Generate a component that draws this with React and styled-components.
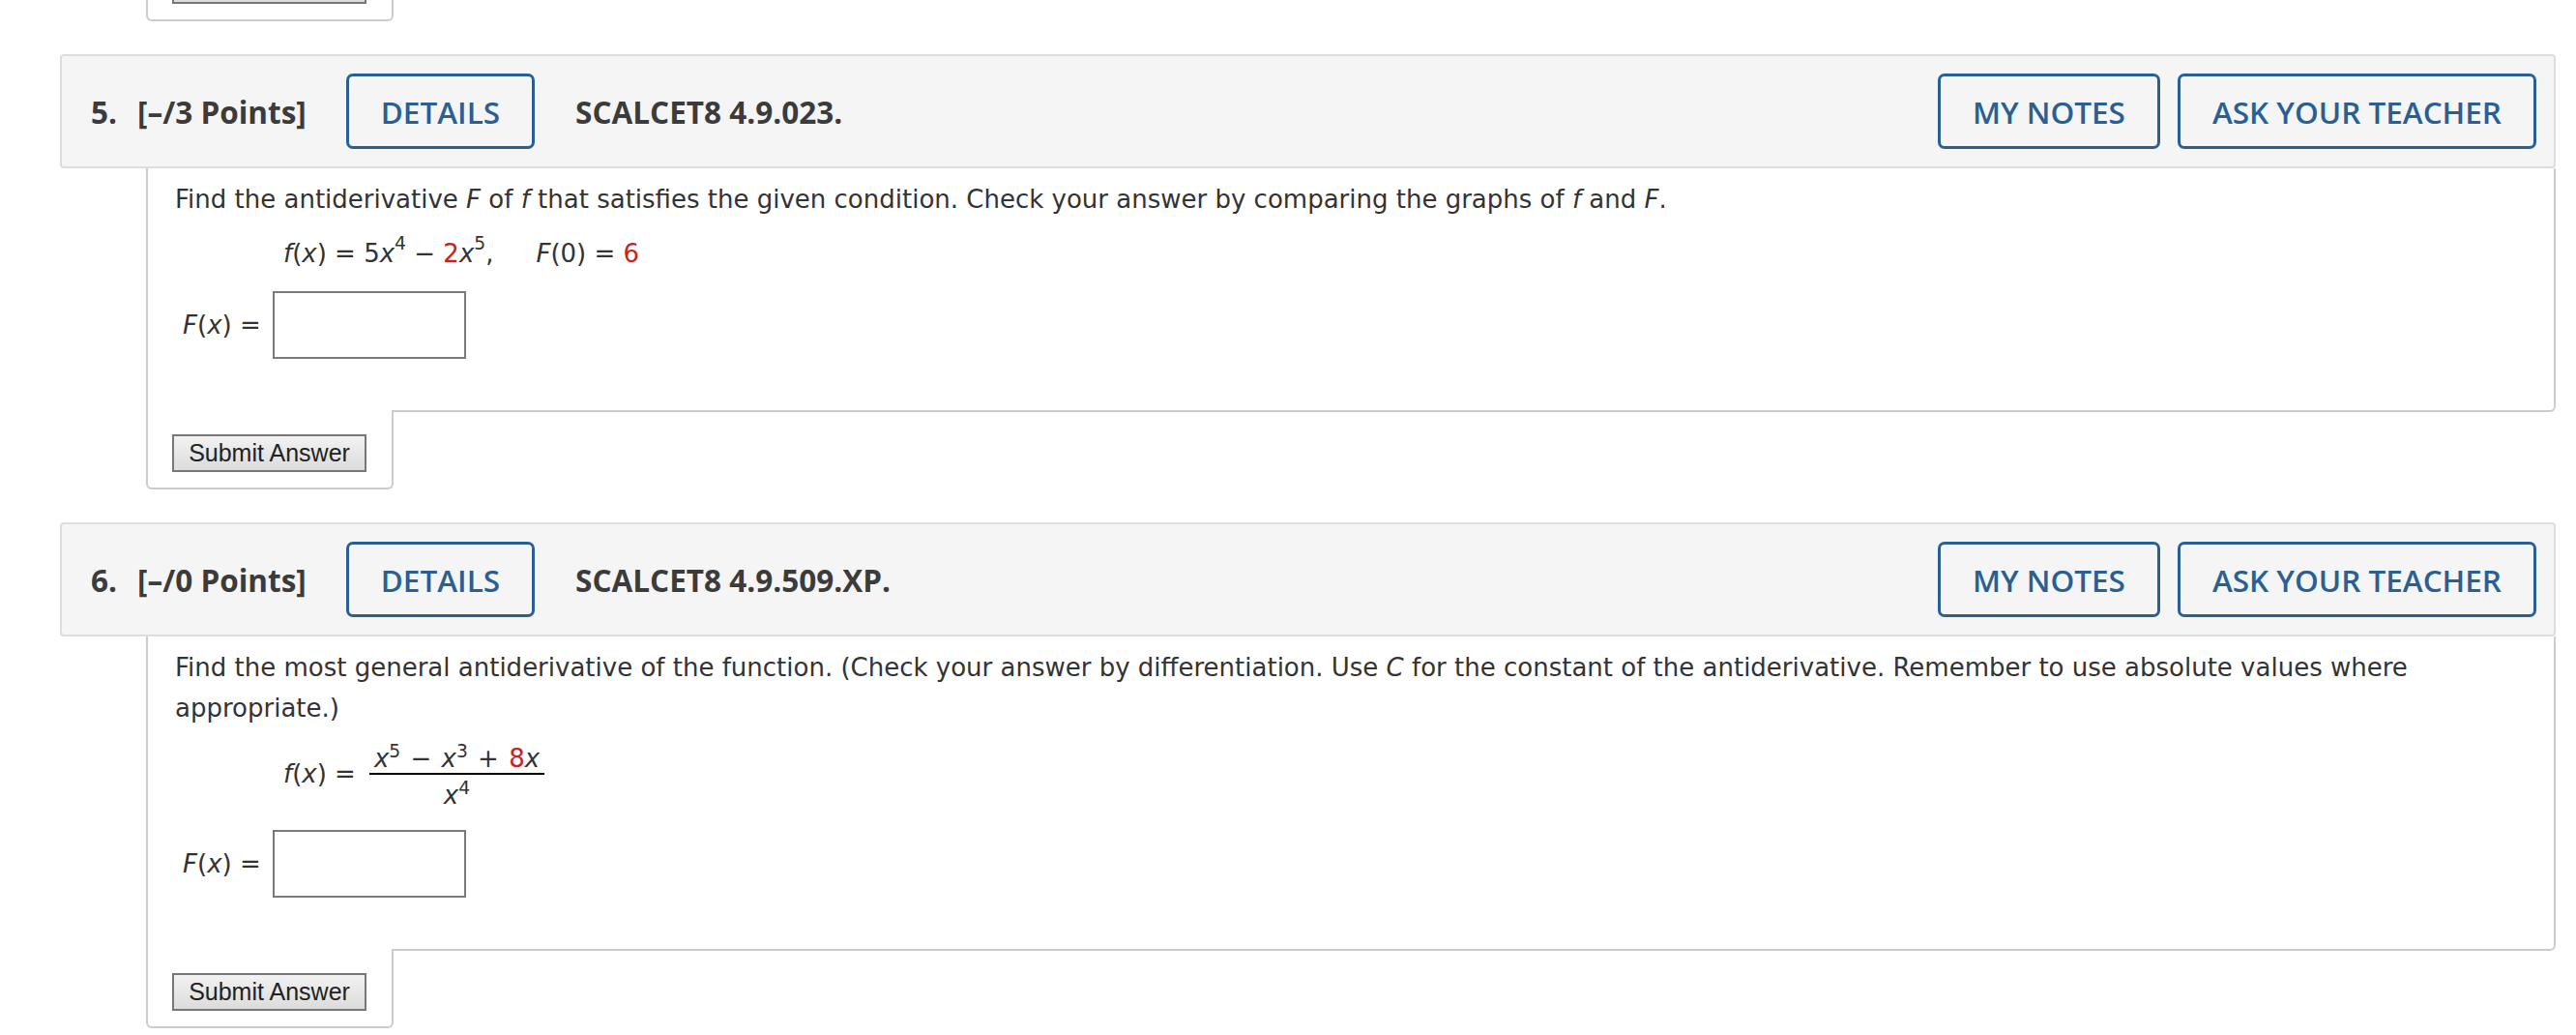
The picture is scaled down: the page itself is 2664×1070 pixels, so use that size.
import React from "react";
import styled, { createGlobalStyle } from "styled-components";

const GlobalStyle = createGlobalStyle`
  html, body {
    margin: 0;
    padding: 0;
    background: #ffffff;
  }
  body {
    font-family: "DejaVu Sans", Verdana, sans-serif;
    color: #333333;
  }
`;

const Page = styled.div`
  display: flow-root;
  padding: 0 21px 0 62px;
`;

const Question = styled.section`
  margin-top: 34px;
`;

const Header = styled.div`
  display: flex;
  align-items: center;
  background: #f5f5f5;
  border: 2px solid #dddddd;
  border-radius: 4px;
  padding: 18px 18px 18px 30px;
  font-family: "Open Sans", "Liberation Sans", sans-serif;
  font-size: 31.5px;
  color: #3b3b3b;
`;

const Number = styled.span`
  font-weight: 700;
  margin-right: 21px;
`;

const Points = styled.span`
  font-weight: 700;
  margin-right: 41px;
`;

const Code = styled.span`
  font-weight: 700;
  margin-left: 42px;
`;

const OutlineButton = styled.button`
  height: 78px;
  padding: 0 33px;
  margin-left: ${(p) => (p.$push ? "auto" : p.$gap ? "18px" : "0")};
  background: transparent;
  border: 3px solid #2a5f94;
  border-radius: 7px;
  color: #2a5f94;
  font-family: "Open Sans", "Liberation Sans", sans-serif;
  font-size: 31.5px;
  font-weight: 600;
  cursor: pointer;
`;

const Body = styled.div`
  margin-left: 89px;
  border: 2px solid #cccccc;
  border-top: none;
  border-bottom-right-radius: 6px;
  padding: 11px 30px 53px 28px;
  font-size: 26px;
`;

const Para = styled.p`
  margin: 0;
  line-height: 42px;
`;

const MathRow = styled.div`
  display: flex;
  align-items: center;
  margin: ${(p) => p.$top}px 0 0 112px;
  line-height: 42px;
  white-space: pre;
`;

const I = styled.i`
  font-style: italic;
`;

const Red = styled.span`
  color: #c9211e;
`;

const Sup = styled.span`
  position: relative;
  top: -0.55em;
  font-size: 72%;
  line-height: 0;
`;

const Spacer = styled.span`
  display: inline-block;
  width: ${(p) => p.$w}px;
`;

const Fraction = styled.span`
  display: inline-flex;
  flex-direction: column;
  align-items: center;
  margin-left: 14px;
`;

const Numer = styled.span`
  padding: 6px 5px 0;
  line-height: 30px;
  word-spacing: 2px;
  border-bottom: 2px solid #000000;
`;

const Denom = styled.span`
  padding-top: 6px;
  line-height: 30px;
`;

const AnswerRow = styled.div`
  display: flex;
  align-items: center;
  gap: 12px;
  margin: ${(p) => p.$top}px 0 0 8px;
`;

const AnswerInput = styled.input`
  box-sizing: border-box;
  width: 200px;
  height: 70px;
  border: 2px solid #7a7a7a;
  background: #fff;
  font-size: 24px;
  margin: 0;
`;

const Tab = styled.div`
  box-sizing: border-box;
  margin: ${(p) => (p.$prev ? "-60px" : "-2px")} 0 0 89px;
  width: 256px;
  border: 2px solid #cccccc;
  border-top: none;
  border-radius: 0 0 6px 6px;
  background: #ffffff;
  padding: 25px 0 16px 25px;
`;

const SubmitButton = styled.button`
  box-sizing: border-box;
  width: 201px;
  height: 39px;
  margin: 0;
  padding: 0;
  display: block;
  border: 2px solid #777777;
  background: linear-gradient(#f2f2f2, #dcdcdc);
  color: #222222;
  font-family: "Liberation Sans", Arial, sans-serif;
  font-size: 25px;
  cursor: pointer;
`;

const QuestionHeader = ({ num, points, code }) => (
  <Header>
    <Number>{num}.</Number>
    <Points>[–/{points} Points]</Points>
    <OutlineButton>DETAILS</OutlineButton>
    <Code>{code}</Code>
    <OutlineButton $push>MY NOTES</OutlineButton>
    <OutlineButton $gap>ASK YOUR TEACHER</OutlineButton>
  </Header>
);

const Answer = ({ top }) => (
  <AnswerRow $top={top}>
    <span>
      <I>F</I>(<I>x</I>) =
    </span>
    <AnswerInput type="text" />
  </AnswerRow>
);

const SubmitTab = ({ prev }) => (
  <Tab $prev={prev}>
    <SubmitButton>Submit Answer</SubmitButton>
  </Tab>
);

export default function App() {
  return (
    <Page>
      <GlobalStyle />
      <SubmitTab prev />

      <Question>
        <QuestionHeader num={5} points={3} code="SCALCET8 4.9.023." />
        <Body>
          <Para>
            Find the antiderivative <I>F</I> of <I>f</I> that satisfies the given condition. Check your
            answer by comparing the graphs of <I>f</I> and <I>F</I>.
          </Para>
          <MathRow $top={14}>
            <I>f</I>(<I>x</I>) = 5<I>x</I>
            <Sup>4</Sup> − <Red>2</Red>
            <I>x</I>
            <Sup>5</Sup>,<Spacer $w={44} />
            <I>F</I>(0) = <Red>6</Red>
          </MathRow>
          <Answer top={18} />
        </Body>
        <SubmitTab />
      </Question>

      <Question>
        <QuestionHeader num={6} points={0} code="SCALCET8 4.9.509.XP." />
        <Body>
          <Para>
            Find the most general antiderivative of the function. (Check your answer by
            differentiation. Use <I>C</I> for the constant of the antiderivative. Remember to use
            absolute values where appropriate.)
          </Para>
          <MathRow $top={10}>
            <I>f</I>(<I>x</I>) =
            <Fraction>
              <Numer>
                <I>x</I>
                <Sup>5</Sup> − <I>x</I>
                <Sup>3</Sup> + <Red>8</Red>
                <I>x</I>
              </Numer>
              <Denom>
                <I>x</I>
                <Sup>4</Sup>
              </Denom>
            </Fraction>
          </MathRow>
          <Answer top={21} />
        </Body>
        <SubmitTab />
      </Question>
    </Page>
  );
}
